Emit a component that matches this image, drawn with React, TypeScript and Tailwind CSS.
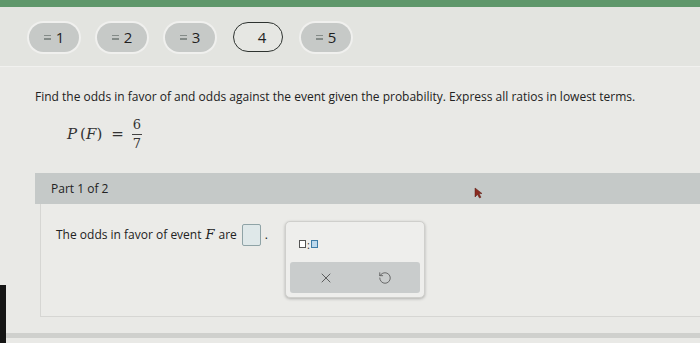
import React from "react";
import { RotateCcw, X } from "lucide-react";

function Pill({ n, active }: { n: string; active?: boolean }) {
  if (active) {
    return (
      <div className="w-[50px] h-[30px] rounded-full border-[1.5px] border-[#2e3330] bg-[#e6e7e3] flex items-center justify-center pl-[8px] text-[15px] text-[#1f1f1f]">
        {n}
      </div>
    );
  }
  return (
    <div className="w-[50px] h-[29px] rounded-full bg-[#c6c9c7] ring-2 ring-[#f0f0ee] flex items-center justify-center gap-[5px] text-[15px] text-[#1f1f1f]">
      <span className="flex flex-col gap-[2px]">
        <span className="block w-[7px] h-[1.5px] bg-[#848b88]" />
        <span className="block w-[7px] h-[1.5px] bg-[#848b88]" />
      </span>
      <span>{n}</span>
    </div>
  );
}

export default function App() {
  return (
    <div className="relative w-[700px] h-[343px] overflow-hidden bg-[#e9e9e6] text-[#2b2b2b] [font-family:'Open_Sans',sans-serif]">
      <div className="h-[7px] bg-[#5f976b]" />
      <div className="h-[60px] bg-[#e3e4e0] border-b border-[#f1f1ef] flex items-center pl-[29px] gap-[18px] pt-[1px]">
        <Pill n="1" />
        <Pill n="2" />
        <Pill n="3" />
        <Pill n="4" active />
        <Pill n="5" />
      </div>
      <div className="pl-[35px] pt-[21px]">
        <p className="text-[12px] leading-[18px] text-[#222] font-medium">
          Find the odds in favor of and odds against the event given the probability. Express all ratios in lowest terms.
        </p>
        <div className="mt-[12px] ml-[32px] flex items-center [font-family:'DejaVu_Serif','Liberation_Serif',serif] text-[15px] text-[#333]">
          <span className="italic">P</span>
          <span className="ml-[3px]">(<span className="italic">F</span>)</span>
          <span className="ml-[9px]">=</span>
          <span className="ml-[8px] flex flex-col items-center text-[13px] leading-[14px]">
            <span>6</span>
            <span className="block my-[2px] w-[10px] h-[1px] bg-[#444]" />
            <span>7</span>
          </span>
        </div>
        <div className="mt-[22px] h-[31px] bg-[#c5c9c8] flex items-center pl-[16px] text-[12px] font-medium text-[#222]">
          Part 1 of 2
        </div>
        <div className="ml-[5px] h-[113px] border-l border-b border-[#d6d6d3] bg-[#ebebe8] pl-[15px] pt-[19px] flex items-start">
          <div className="flex items-center text-[12px] font-medium text-[#222] pt-[1px]">
            <span>The odds in favor of event</span>
            <span className="ml-[4px] italic [font-family:'DejaVu_Serif',serif] text-[13px] font-normal">F</span>
            <span className="ml-[4px]">are</span>
            <span className="ml-[5px] w-[19px] h-[22px] border border-[#8fa3a6] bg-[#dfe8e9] rounded-[2px]" />
            <span className="ml-[4px]">.</span>
          </div>
          <div className="ml-[17px] mt-[-2px] w-[140px] h-[77px] rounded-[5px] border border-[#cfcfcc] bg-[#eeeeec] shadow-[0_1px_3px_rgba(0,0,0,0.25)] p-[4px] flex flex-col">
            <div className="h-[36px] flex items-center pl-[9px] gap-[1px] text-[11px] text-[#333]">
              <span className="w-[7px] h-[8px] border border-[#555] bg-white" />
              <span className="leading-none">:</span>
              <span className="w-[7px] h-[8px] border border-[#3e7ca6] bg-[#bcd8ec]" />
            </div>
            <div className="flex-1 rounded-[3px] bg-[#c9cccc] flex items-center justify-around px-[6px]">
              <X size={16} strokeWidth={1.4} className="text-[#555]" />
              <RotateCcw size={14} strokeWidth={1.4} className="text-[#555]" />
            </div>
          </div>
        </div>
      </div>
      <div className="absolute left-0 right-0 top-[333px] h-[5px] bg-[#cfd0cd]" />
      <div className="absolute left-0 top-[285px] bottom-0 w-[6px] bg-[#151515]" />
      <svg className="absolute left-[474px] top-[187px]" width="9" height="12" viewBox="0 0 9 12">
        <path d="M1 1 L1 10 L3.5 7.5 L5.5 11 L7 10.2 L5 6.8 L8 6.5 Z" fill="#8a2a20" stroke="#5a1a10" strokeWidth="0.5" />
      </svg>
    </div>
  );
}
